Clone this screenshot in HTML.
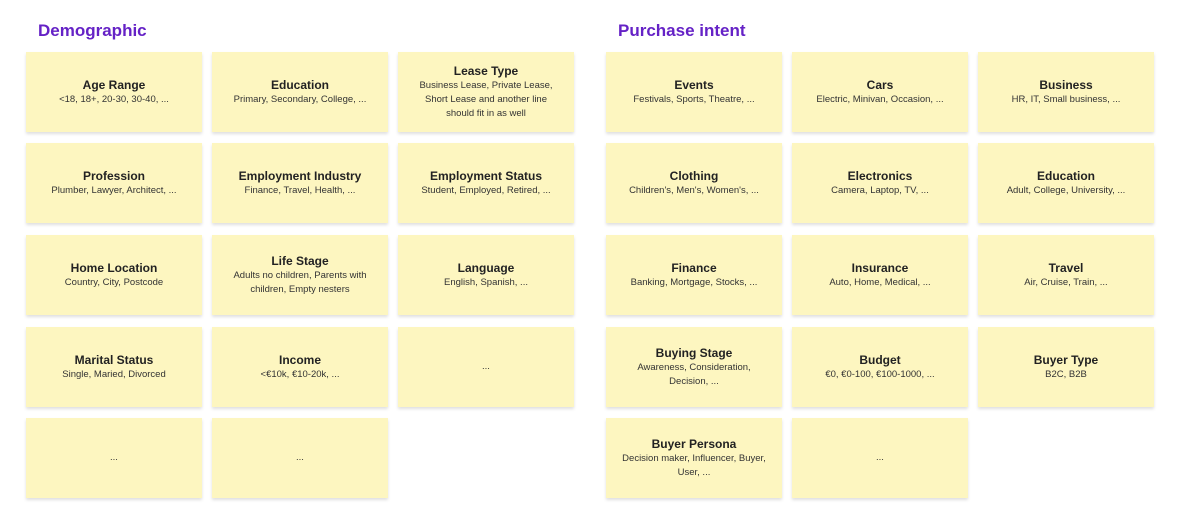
<!DOCTYPE html><html><head><style>
body{margin:0;width:1200px;height:523px;background:#fff;font-family:"Liberation Sans",sans-serif;position:relative;overflow:hidden}
h2{position:absolute;margin:0;font-size:17px;font-weight:bold;color:#6522c6;top:21px}
.c{position:absolute;width:176px;height:80px;background:#fdf6c0;box-shadow:0 2px 3px rgba(0,0,0,.13);display:flex;flex-direction:column;justify-content:center;align-items:center;text-align:center;color:#222}
.c b{font-size:12px;line-height:15px}
.c span{font-size:9.5px;line-height:14px;padding:0 13px;color:#333}
</style></head><body>
<h2 style="left:38px">Demographic</h2>
<h2 style="left:618px">Purchase intent</h2>
<div class="c" style="left:26px;top:52px"><b>Age Range</b><span>&lt;18, 18+, 20-30, 30-40, ...</span></div>
<div class="c" style="left:212px;top:52px"><b>Education</b><span>Primary, Secondary, College, ...</span></div>
<div class="c" style="left:398px;top:52px"><b>Lease Type</b><span>Business Lease, Private Lease, Short Lease and another line should fit in as well</span></div>
<div class="c" style="left:26px;top:143px"><b>Profession</b><span>Plumber, Lawyer, Architect, ...</span></div>
<div class="c" style="left:212px;top:143px"><b>Employment Industry</b><span>Finance, Travel, Health, ...</span></div>
<div class="c" style="left:398px;top:143px"><b>Employment Status</b><span>Student, Employed, Retired, ...</span></div>
<div class="c" style="left:26px;top:235px"><b>Home Location</b><span>Country, City, Postcode</span></div>
<div class="c" style="left:212px;top:235px"><b>Life Stage</b><span>Adults no children, Parents with children, Empty nesters</span></div>
<div class="c" style="left:398px;top:235px"><b>Language</b><span>English, Spanish, ...</span></div>
<div class="c" style="left:26px;top:327px"><b>Marital Status</b><span>Single, Maried, Divorced</span></div>
<div class="c" style="left:212px;top:327px"><b>Income</b><span>&lt;€10k, €10-20k, ...</span></div>
<div class="c" style="left:398px;top:327px"><span>...</span></div>
<div class="c" style="left:26px;top:418px"><span>...</span></div>
<div class="c" style="left:212px;top:418px"><span>...</span></div>

<div class="c" style="left:606px;top:52px"><b>Events</b><span>Festivals, Sports, Theatre, ...</span></div>
<div class="c" style="left:792px;top:52px"><b>Cars</b><span>Electric, Minivan, Occasion, ...</span></div>
<div class="c" style="left:978px;top:52px"><b>Business</b><span>HR, IT, Small business, ...</span></div>
<div class="c" style="left:606px;top:143px"><b>Clothing</b><span>Children's, Men's, Women's, ...</span></div>
<div class="c" style="left:792px;top:143px"><b>Electronics</b><span>Camera, Laptop, TV, ...</span></div>
<div class="c" style="left:978px;top:143px"><b>Education</b><span>Adult, College, University, ...</span></div>
<div class="c" style="left:606px;top:235px"><b>Finance</b><span>Banking, Mortgage, Stocks, ...</span></div>
<div class="c" style="left:792px;top:235px"><b>Insurance</b><span>Auto, Home, Medical, ...</span></div>
<div class="c" style="left:978px;top:235px"><b>Travel</b><span>Air, Cruise, Train, ...</span></div>
<div class="c" style="left:606px;top:327px"><b>Buying Stage</b><span>Awareness, Consideration, Decision, ...</span></div>
<div class="c" style="left:792px;top:327px"><b>Budget</b><span>€0, €0-100, €100-1000, ...</span></div>
<div class="c" style="left:978px;top:327px"><b>Buyer Type</b><span>B2C, B2B</span></div>
<div class="c" style="left:606px;top:418px"><b>Buyer Persona</b><span>Decision maker, Influencer, Buyer, User, ...</span></div>
<div class="c" style="left:792px;top:418px"><span>...</span></div>
</body></html>
